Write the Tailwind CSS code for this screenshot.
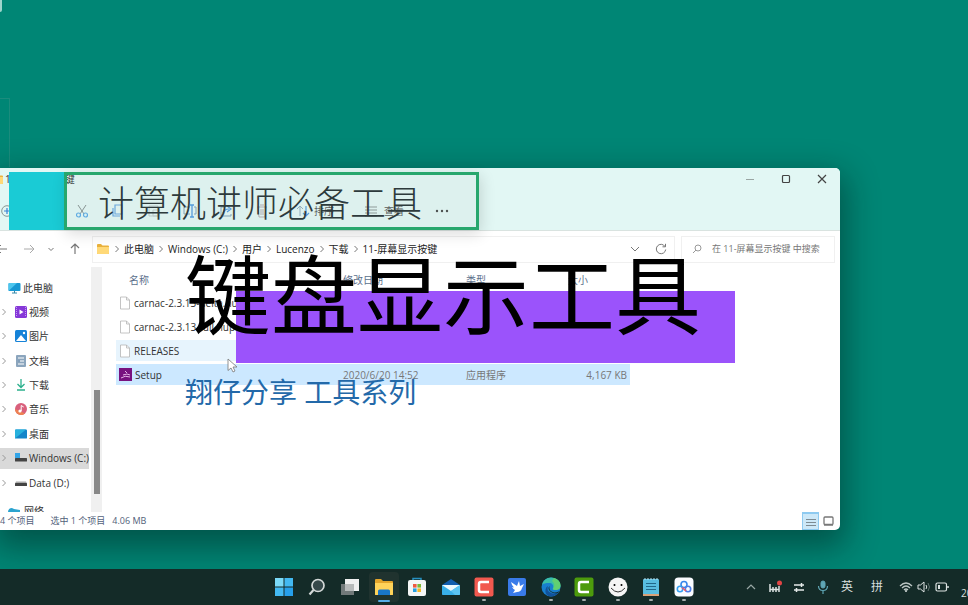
<!DOCTYPE html>
<html lang="zh-CN">

<head>
    <meta charset="UTF-8">
    <meta name="viewport" content="width=device-width, initial-scale=1.0">
    <title>键盘显示工具</title>
    <script src="https://cdn.jsdelivr.net/npm/@tailwindcss/browser@4"></script>
</head>

<body class="flex h-screen flex-col overflow-hidden bg-[#008675] font-['Open_Sans','Noto_Sans_CJK_SC',sans-serif] text-[10px] leading-4 text-[#333]">
    <!-- shared icons -->
    <svg class="hidden">
        <symbol id="chev" viewBox="0 0 8 8"><path d="M2.5 1l3 3-3 3" fill="none" stroke="currentColor" stroke-width="1" /></symbol>
        <symbol id="file" viewBox="0 0 12 14"><path d="M1.5 1h6l3 3v9h-9z" fill="#fff" stroke="#b5b5b5" stroke-width=".8" /><path d="M7.500 1v3h3" fill="none" stroke="#b5b5b5" stroke-width=".8" /></symbol>
        <symbol id="folder" viewBox="0 0 14 12"><path d="M1 2q0-1 1-1h3l1.500 1.500H12q1 0 1 1V10q0 1-1 1H2q-1 0-1-1z" fill="#eab23c" /><path d="M1 4h12v6q0 1-1 1H2q-1 0-1-1z" fill="#ffd978" /></symbol>
    </svg>

    <main class="relative flex-1 overflow-hidden">
        <div class="absolute top-0 left-0 h-3 w-[2px] rounded-br-full bg-[#9ed5cc]"></div>
        <div class="absolute top-[98px] left-0 h-[69px] w-[10px] border-t border-r border-[#1b8c7d]"></div>

        <!-- explorer window -->
        <section class="absolute top-[168px] right-[128px] bottom-[39px] left-0 flex flex-col overflow-hidden rounded-r-[5px] bg-white shadow-[0_12px_32px_6px_rgba(0,20,16,0.42)]">
            <header class="h-[63px] border-b border-[#d9e3e0] bg-[#e2f7f4]">
                <div class="flex h-[22px] items-center">
                    <svg class="-ml-[10px] h-3 w-[14px]"><use href="#folder" /></svg>
                    <h1 class="flex-1 pl-px whitespace-nowrap">1<span class="ml-[54px] text-black">键</span></h1>
                    <div class="flex text-[#444]">
                        <button aria-label="最小化" class="grid w-9 place-items-center"><svg class="size-[10px]" viewBox="0 0 10 10"><path d="M1 5.500h8" stroke="#9aa5a3" /></svg></button>
                        <button aria-label="最大化" class="grid w-9 place-items-center"><svg class="size-[10px]" viewBox="0 0 10 10"><rect x="1.500" y="1.500" width="7" height="7" rx="1" fill="none" stroke="currentColor" stroke-width="1.200" /></svg></button>
                        <button aria-label="关闭" class="grid w-9 place-items-center"><svg class="size-[10px]" viewBox="0 0 10 10"><path d="M1 1l8 8M9 1l-8 8" stroke="currentColor" stroke-width="1.200" /></svg></button>
                    </div>
                </div>
                <div class="flex h-[41px] items-center">
                    <button aria-label="新建" class="w-16"><svg class="ml-px size-3" viewBox="0 0 12 12"><circle cx="6" cy="6" r="5.300" fill="none" stroke="#8a9693" /><path d="M3 6h6M6 3v6" stroke="#3b82d0" stroke-width="1.200" /></svg></button>
                    <button aria-label="剪切" class="grid w-9 place-items-center"><svg class="size-[14px]" viewBox="0 0 14 14" fill="none"><path d="M3 1l6 9M11 1L5 10" stroke="#6f7b7b" /><circle cx="3.500" cy="11" r="2" stroke="#3b9be5" stroke-width="1.200" /><circle cx="10.500" cy="11" r="2" stroke="#3b9be5" stroke-width="1.200" /></svg></button>
                    <button aria-label="复制" class="grid w-9 place-items-center"><svg class="size-[14px]" viewBox="0 0 14 14" fill="none"><path d="M4 1h7v9H4zM9 12H2V4" stroke="#4a96dc" stroke-width="1.200" /></svg></button>
                    <button aria-label="粘贴" class="grid w-9 place-items-center"><svg class="size-[14px]" viewBox="0 0 14 14" fill="none"><path d="M2 2h9v10H2zM6 6h6v6H6z" stroke="#b6c4c3" /></svg></button>
                    <button aria-label="重命名" class="grid w-9 place-items-center"><svg class="size-[14px]" viewBox="0 0 14 14" fill="none"><path d="M7 3H1v7h6M11 3h2v7h-2" stroke="#6b8fae" /><path d="M7 1h4M7 13h4M9 1v12" stroke="#2d86dc" stroke-width="1.300" /></svg></button>
                    <button aria-label="共享" class="grid w-9 place-items-center"><svg class="size-[14px]" viewBox="0 0 14 14" fill="none"><path d="M6 3H2v9h10v-2" stroke="#6b8fae" /><path d="M4 9c1-3 3-4 6-4M8 2l4 3-4 3" stroke="#2d86dc" stroke-width="1.200" /></svg></button>
                    <button aria-label="删除" class="grid w-9 place-items-center"><svg class="size-[14px]" viewBox="0 0 14 14" fill="none"><path d="M2 3h10M3 3l1 10h6l1-10M5 1h4M6 5v6M8 5v6" stroke="#a79aa0" /></svg></button>
                    <button class="ml-4 flex items-center gap-1"><svg class="size-[14px]" viewBox="0 0 14 14" fill="none"><path d="M4 12V2M1 5l3-3 3 3" stroke="#7f9cb5" /><path d="M10 2v10M7 9l3 3 3-3" stroke="#2d86dc" stroke-width="1.200" /></svg>排序</button>
                    <button class="ml-[30px] flex items-center gap-1.5"><svg class="size-[14px]" viewBox="0 0 14 14"><path d="M1 3h12M1 6h12M1 9h12M1 12h12" stroke="#7a8583" /></svg>查看</button>
                    <button aria-label="更多" class="ml-5 grid w-9 place-items-center"><svg class="size-[14px]" viewBox="0 0 14 14" fill="#222"><circle cx="2" cy="7" r="1.200" /><circle cx="7" cy="7" r="1.200" /><circle cx="12" cy="7" r="1.200" /></svg></button>
                </div>
            </header>

            <!-- address bar -->
            <div class="flex h-9 items-center text-[#777]">
                <nav class="flex w-[92px] items-center">
                    <button aria-label="后退" class="-ml-1 w-[27px]"><svg class="size-3" viewBox="0 0 12 12" fill="none" stroke="currentColor"><path d="M11 6H1M5 2L1 6l4 4" /></svg></button>
                    <button aria-label="前进" class="w-6"><svg class="size-3" viewBox="0 0 12 12" fill="none" stroke="#aaa"><path d="M1 6h10M7 2l4 4-4 4" /></svg></button>
                    <button aria-label="最近" class="w-[22px]"><svg class="size-2" viewBox="0 0 8 8" fill="none" stroke="currentColor"><path d="M1.500 3L4 5.500 6.500 3" /></svg></button>
                    <button aria-label="上移"><svg class="size-3" viewBox="0 0 12 12" fill="none" stroke="currentColor" stroke-width="1.200"><path d="M6 11V1M2 5l4-4 4 4" /></svg></button>
                </nav>
                <div class="flex h-[27px] flex-1 items-center gap-[3px] border border-[#f0f0f0] pl-[3px] whitespace-nowrap">
                    <svg class="h-3 w-[14px]"><use href="#folder" /></svg>
                    <svg class="size-2"><use href="#chev" /></svg><a href="#" class="text-[#222]">此电脑</a>
                    <svg class="size-2"><use href="#chev" /></svg><a href="#" class="text-[#222]">Windows (C:)</a>
                    <svg class="size-2"><use href="#chev" /></svg><a href="#" class="text-[#222]">用户</a>
                    <svg class="size-2"><use href="#chev" /></svg><a href="#" class="text-[#222]">Lucenzo</a>
                    <svg class="size-2"><use href="#chev" /></svg><a href="#" class="text-[#222]">下载</a>
                    <svg class="size-2"><use href="#chev" /></svg><a href="#" class="text-[#222]">11-屏幕显示按键</a>
                    <button aria-label="展开" class="ml-auto"><svg class="size-[10px]" viewBox="0 0 10 10" fill="none" stroke="currentColor"><path d="M1 3l4 4 4-4" /></svg></button>
                    <button aria-label="刷新" class="mr-[7px] ml-3"><svg class="size-3" viewBox="0 0 12 12" fill="none" stroke="currentColor"><path d="M10 3.500A4.700 4.700 0 1 0 10.700 6.500M10.500 .8v3h-3" /></svg></button>
                </div>
                <label class="mr-[5px] ml-1.5 flex h-[27px] w-[154px] items-center gap-2.5 border border-[#f0f0f0] pl-2.5">
                    <svg class="size-[10px] shrink-0" viewBox="0 0 10 10" fill="none" stroke="#999"><circle cx="6" cy="4" r="3" /><path d="M4 6L1 9" /></svg>
                    <input type="text" aria-label="搜索" placeholder="在 11-屏幕显示按键 中搜索" class="min-w-0 flex-1 text-[9px] outline-none placeholder:text-[#777]">
                </label>
            </div>

            <div class="flex min-h-0 flex-1">
                <!-- navigation tree -->
                <aside class="w-[91px] overflow-hidden pt-[10px] whitespace-nowrap">
                    <ul class="flex h-[216px] flex-col justify-between">
                        <li class="flex h-[21px] items-center pl-2"><svg class="mr-0.5 h-3 w-[13px]" viewBox="0 0 13 12"><rect x=".5" y="1" width="12" height="8" rx="1" fill="#1798d3" /><path d="M.5 9V2q0-1 1-1H9z" fill="#4cc6ee" /><path d="M4 11h5M6.500 9v2" stroke="#3688a8" /></svg>此电脑</li>
                        <li class="flex h-[21px] items-center"><svg class="mr-[7px] size-2 text-[#999]"><use href="#chev" /></svg><svg class="mr-0.5 size-3" viewBox="0 0 12 12"><rect width="12" height="12" rx="1.500" fill="#8638d8" /><path d="M1.500 1v10M10.500 1v10" stroke="#c59af2" stroke-dasharray="1 1" /><path d="M4.500 3.500L8.500 6l-4 2.500z" fill="#fff" /></svg>视频</li>
                        <li class="flex h-[21px] items-center"><svg class="mr-[7px] size-2 text-[#999]"><use href="#chev" /></svg><svg class="mr-0.5 size-3" viewBox="0 0 12 12"><rect width="12" height="12" rx="1.500" fill="#1683d8" /><path d="M1 11l5-6 5 6z" fill="#fff" /><circle cx="9" cy="3" r="1.200" fill="#fff" /></svg>图片</li>
                        <li class="flex h-[21px] items-center"><svg class="mr-[7px] size-2 text-[#999]"><use href="#chev" /></svg><svg class="mr-0.5 size-3" viewBox="0 0 12 12"><rect x="1" width="10" height="12" rx="1" fill="#8ba5bd" /><path d="M3 3h6M3 6h6M3 9h6" stroke="#fff" /><path d="M3 6h2" stroke="#3f6c96" /></svg>文档</li>
                        <li class="flex h-[21px] items-center"><svg class="mr-[7px] size-2 text-[#999]"><use href="#chev" /></svg><svg class="mr-0.5 size-3" viewBox="0 0 12 12" fill="none" stroke="#2bb08c" stroke-width="1.300"><path d="M6 0v8M2.500 5L6 8.500 9.500 5M2 11h8" /></svg>下载</li>
                        <li class="flex h-[21px] items-center"><svg class="mr-[7px] size-2 text-[#999]"><use href="#chev" /></svg><svg class="mr-0.5 size-3" viewBox="0 0 12 12"><circle cx="6" cy="6" r="6" fill="#d9607c" /><path d="M0 6a6 6 0 0 0 10 4.500z" fill="#ed8253" /><circle cx="5" cy="8" r="1.600" fill="#fff" /><path d="M6.200 8V2.500l2.500 1.500" fill="none" stroke="#fff" /></svg>音乐</li>
                        <li class="flex h-[21px] items-center"><svg class="mr-[7px] size-2 text-[#999]"><use href="#chev" /></svg><svg class="mr-0.5 size-3" viewBox="0 0 13 12"><rect y="1" width="13" height="10" rx="1" fill="#1485c9" /><path d="M0 11V2q0-1 1-1h11z" fill="#27b1dd" /></svg>桌面</li>
                        <li class="mr-0.5 flex h-[21px] items-center bg-[#d9d9d9]"><svg class="mr-[7px] size-2 shrink-0 text-[#999]"><use href="#chev" /></svg><svg class="mr-0.5 size-3 shrink-0" viewBox="0 0 12 12"><path d="M0 1h5v5H0z" fill="#33a5e8" /><rect y="6" width="12" height="3.500" rx=".5" fill="#444" /></svg>Windows (C:)</li>
                        <li class="flex h-[21px] items-center"><svg class="mr-[7px] size-2 text-[#999]"><use href="#chev" /></svg><svg class="mr-0.5 size-3" viewBox="0 0 12 12"><path d="M1 4.500h10l1 2H0z" fill="#aaa" /><rect y="6" width="12" height="3" rx=".5" fill="#444" /></svg>Data (D:)</li>
                    </ul>
                    <div class="mt-2.5 flex items-start pl-2"><svg class="mt-1 mr-1 size-3" viewBox="0 0 12 12"><path d="M0 4q2-5 6-2l6 1v7H1z" fill="#2aa3cf" /></svg>网络</div>
                </aside>
                <div class="w-[11px] bg-[#f0f0f0] pt-[123px]"><div class="mx-auto h-[104px] w-[6px] bg-[#888]"></div></div>

                <!-- file list -->
                <div class="min-w-0 flex-1 pl-[14px]">
                    <table class="w-[514px] table-fixed border-separate border-spacing-x-0 border-spacing-y-[3px] whitespace-nowrap">
                        <thead>
                            <tr class="h-[19px] text-left text-[#5c6f8c]">
                                <th class="w-[219px] pl-[13px] font-normal">名称</th>
                                <th class="w-[123px] pl-2 font-normal">修改日期</th>
                                <th class="w-[104px] pl-2 font-normal">类型</th>
                                <th class="pl-1.5 font-normal">大小</th>
                            </tr>
                        </thead>
                        <tbody class="text-[#777]">
                            <tr class="h-[21px]">
                                <td class="pl-[3px] text-[#333]"><span class="flex items-center gap-[3px]"><svg class="h-[14px] w-3"><use href="#file" /></svg>carnac-2.3.13-delta.nup</span></td>
                                <td></td>
                                <td></td>
                                <td></td>
                            </tr>
                            <tr class="h-[21px]">
                                <td class="pl-[3px] text-[#333]"><span class="flex items-center gap-[3px]"><svg class="h-[14px] w-3"><use href="#file" /></svg>carnac-2.3.13-full.nup</span></td>
                                <td></td>
                                <td></td>
                                <td></td>
                            </tr>
                            <tr class="h-[21px] bg-[#e7f4fd]">
                                <td class="pl-[3px] text-[#333]"><span class="flex items-center gap-[3px]"><svg class="h-[14px] w-3"><use href="#file" /></svg>RELEASES</span></td>
                                <td></td>
                                <td></td>
                                <td></td>
                            </tr>
                            <tr class="h-[21px] bg-[#cce8ff]">
                                <td class="pl-[3px] text-[#333]"><span class="flex items-center gap-[3px]"><svg class="size-[13px]" viewBox="0 0 13 13"><rect width="13" height="13" fill="#78127f" /><path d="M2 10q4-3 9-1M4 7l4-1 3 1M6 3l2 2" fill="none" stroke="#e5b5e8" /></svg>Setup</span></td>
                                <td class="pl-2">2020/6/20 14:52</td>
                                <td class="pl-2">应用程序</td>
                                <td class="pr-[3px] text-right">4,167 KB</td>
                            </tr>
                        </tbody>
                    </table>
                </div>
            </div>

            <footer class="flex h-[18px] items-center text-[9px] text-[#52617a]">
                <span>4 个项目</span>
                <span class="ml-4">选中 1 个项目&nbsp;&nbsp; 4.06 MB</span>
                <button aria-label="详细信息" class="mr-1 ml-auto grid h-[18px] w-[17px] place-items-center border border-t-2 border-[#8ecaf0] bg-[#cce8f8]"><svg class="size-[10px]" viewBox="0 0 10 10"><path d="M0 2.500h10M0 5.500h10M0 8.500h10" stroke="#7d8b93" stroke-width="1.200" /></svg></button>
                <button aria-label="缩略图" class="mr-1.5"><svg class="size-[11px]" viewBox="0 0 11 11"><rect x="1" y="1" width="9" height="7.500" rx="1" fill="#fff" stroke="#777" stroke-width="1.300" /><path d="M1 9.500h9" stroke="#999" /></svg></button>
            </footer>
        </section>

        <!-- video title overlay -->
        <div class="absolute top-[172px] left-[9px] flex h-[58px]">
            <div class="w-[55px] bg-[#1acbd5]"></div>
            <div class="w-[415px] border-3 border-[#27a76d] bg-[#cfdedb]/25 pt-0.5 pl-[31px] text-[36px] leading-[54px] font-light whitespace-nowrap text-[#2d3a3c] shadow-[2px_4px_14px_rgba(0,0,0,0.14)]">计算机讲师必备工具</div>
        </div>
        <div class="absolute top-[291px] left-[236px] h-[72px] w-[499px] bg-[#9b53fb]"></div>
        <h2 class="absolute top-[245px] left-[185px] text-[86px] leading-[100px] whitespace-nowrap text-black">键盘显示工具</h2>
        <p class="absolute top-[372px] left-[185px] text-[28px] leading-10 whitespace-nowrap text-[#2369a9]">翔仔分享 工具系列</p>
        <svg class="absolute top-[358px] left-[227px] h-[15px] w-[11px]" viewBox="0 0 11 15"><path d="M1 1v11.500l3-2.500 2 4 2-1-2-4h4z" fill="#fff" stroke="#777" stroke-width=".8" /></svg>
    </main>

    <!-- taskbar -->
    <footer class="grid h-9 grid-cols-[1fr_434px_1fr] items-center bg-[#142b28] text-[#d8dfde]">
        <span></span>
        <nav class="grid h-9 grid-cols-13 items-center justify-items-center">
            <button aria-label="开始"><svg class="size-[18px]" viewBox="0 0 18 18" fill="#43b9f2"><path d="M0 0h8.500v8.500H0z" fill="#7bdaf8" /><path d="M9.500 0H18v8.500H9.500zM0 9.500h8.500V18H0z" /><path d="M9.500 9.500H18V18H9.500z" fill="#269fea" /></svg></button>
            <button aria-label="搜索"><svg class="size-[18px]" viewBox="0 0 18 18" fill="none" stroke="#d4d9d8"><circle cx="10" cy="7.500" r="6" fill="#36494a" stroke-width="1.700" /><path d="M5.500 12L1.500 16.500" stroke-width="2.200" /></svg></button>
            <button aria-label="任务视图"><svg class="h-[18px] w-5" viewBox="0 0 20 18"><rect x="1" y="6" width="13" height="11" fill="#717979" /><rect x="5" y="1" width="14" height="12" fill="#f0f0f0" /><path d="M5 6h9v7H5z" fill="#b7baba" /></svg></button>
            <button aria-label="文件资源管理器" class="relative grid size-[30px] place-items-center rounded bg-[#20332f]"><svg class="h-[18px] w-5" viewBox="0 0 20 18"><path d="M1 2q0-1 1-1h5l2 2h9q1 0 1 1v13H1z" fill="#e4a52b" /><path d="M1 5h18v11q0 1-1 1H2q-1 0-1-1z" fill="#ffd35a" /><path d="M4 17v-4q0-1.500 1.500-1.500h9q1.500 0 1.500 1.500v4z" fill="#1976c9" /></svg><i class="absolute bottom-0 h-0.5 w-3 rounded bg-[#55aee8]"></i></button>
            <button aria-label="应用商店"><svg class="h-5 w-[18px]" viewBox="0 0 18 20"><path d="M5 4V1.500h8V4" fill="none" stroke="#268fbe" stroke-width="1.500" /><rect y="3" width="18" height="16" rx="2" fill="#f4f6f6" /><path d="M5 7h3.600v3.600H5z" fill="#ef5941" /><path d="M9.400 7H13v3.600H9.400z" fill="#7bb936" /><path d="M5 11.400h3.600V15H5z" fill="#279fdf" /><path d="M9.400 11.400H13V15H9.400z" fill="#f5b727" /></svg></button>
            <button aria-label="邮件"><svg class="h-[18px] w-5" viewBox="0 0 20 18"><path d="M1 7l9-6 9 6v9q0 1-1 1H2q-1 0-1-1z" fill="#125dae" /><path d="M1 7h18v9q0 1-1 1H2q-1 0-1-1z" fill="#38afe8" /><path d="M1 7h18l-9 6z" fill="#eef8fd" /><path d="M10 13l9-6v9q0 1-1 1h-4z" fill="#5cc4f2" /></svg></button>
            <button aria-label="录屏" class="relative"><svg class="size-5" viewBox="0 0 20 20"><rect x=".5" y=".5" width="19" height="19" rx="2" fill="#f1594f" /><path d="M15 5H7q-2 0-2 2v6q0 2 2 2h8" fill="none" stroke="#fff" stroke-width="2.500" /></svg><i class="absolute -bottom-1 left-2 h-0.5 w-1 rounded bg-[#a5aead]"></i></button>
            <button aria-label="飞鸟"><svg class="size-[18px]" viewBox="0 0 18 18"><rect width="18" height="18" rx="2" fill="#397be9" /><path d="M3 4l6 4q1-3 2-5l1 5 4-2-2 4q-1 4-5 4l-4 1 2-3q-2-1-3-3l2 .5Q3.500 7 3 4z" fill="#fff" /></svg></button>
            <button aria-label="Edge" class="relative"><svg class="size-5" viewBox="0 0 20 20"><circle cx="10" cy="10" r="9.500" fill="#187fcf" /><path d="M1 8Q3 .5 10 .5c6 0 9.500 4 9.500 8 0 3-2.500 4.500-6 4.500-2 0-2-1-1.500-2 1-3-1-5-4-5S2 6.500 1 8z" fill="#39bea9" /><path d="M13 1q6.500 2 6.500 7.500 0 4-4 4.500-3 0-3.500-1 3-5-1-8z" fill="#61cf72" /><path d="M7 9q-2 5 3 7 4 1.500 8-1.500-3 5-8.500 5-6-1-5-7Q5 9.500 7 9z" fill="#12539b" /><path d="M8.500 9Q7 14 13 15.500q3 .3 5-1.500l-1 2q-4 1-7-1Q6 12 8.500 9z" fill="#142b28" /></svg><i class="absolute -bottom-1 left-2 h-0.5 w-1 rounded bg-[#a5aead]"></i></button>
            <button aria-label="Camtasia" class="relative"><svg class="size-5" viewBox="0 0 20 20"><rect x=".5" y=".5" width="19" height="19" rx="2" fill="#4d9b0c" /><path d="M15 5H7q-2 0-2 2v6q0 2 2 2h8" fill="none" stroke="#fff" stroke-width="2.500" /></svg><i class="absolute -bottom-1 left-2 h-0.5 w-1 rounded bg-[#a5aead]"></i></button>
            <button aria-label="笑脸" class="relative"><svg class="size-5" viewBox="0 0 20 20"><circle cx="10" cy="10" r="9.500" fill="#f5f5f5" /><circle cx="6.500" cy="8" r="1" /><circle cx="13.500" cy="8" r="1" /><path d="M3 11q7 8 14 0" fill="none" stroke="#333" /></svg><i class="absolute -bottom-1 left-2 h-0.5 w-1 rounded bg-[#a5aead]"></i></button>
            <button aria-label="记事本" class="relative"><svg class="size-5" viewBox="0 0 20 20"><rect x="2" y="2" width="16" height="17" rx="1" fill="#58bde0" /><path d="M2 17h16v2H2z" fill="#d8a177" /><path d="M4 1v2M7 1v2M10 1v2M13 1v2M16 1v2" stroke="#b9e5f3" /><path d="M5 6.500h10M5 9.500h10M5 12.500h10" stroke="#21698b" stroke-width="1.200" /></svg><i class="absolute -bottom-1 left-2 h-0.5 w-1 rounded bg-[#a5aead]"></i></button>
            <button aria-label="百度网盘" class="relative"><svg class="size-5" viewBox="0 0 20 20" fill="none" stroke-width="1.600"><rect x=".5" y=".5" width="19" height="19" rx="4" fill="#fafcff" /><circle cx="10" cy="7.500" r="3" stroke="#3587ec" /><circle cx="6" cy="12" r="2.700" stroke="#35a0f0" /><circle cx="14" cy="12" r="2.700" stroke="#4a7ee8" /><path d="M8 10.500l4 3.500" stroke="#ee5569" /></svg><i class="absolute -bottom-1 left-2 h-0.5 w-1 rounded bg-[#a5aead]"></i></button>
        </nav>
        <div class="flex items-center justify-end overflow-hidden text-[12px]">
            <button aria-label="隐藏的图标" class="grid w-6 place-items-center"><svg class="size-[10px]" viewBox="0 0 10 10" fill="none" stroke="#9aa8a6" stroke-width="1.200"><path d="M1 7l4-4 4 4" /></svg></button>
            <button aria-label="录音" class="grid w-6 place-items-center"><svg class="size-[14px]" viewBox="0 0 14 14"><path d="M2 4v8M5 7v5M8 7v5M11 6v6M2 9.500h9" stroke="#dde3e2" stroke-width="1.500" /><circle cx="11.500" cy="3" r="2.500" fill="#e14444" /></svg></button>
            <button aria-label="切换" class="grid w-6 place-items-center"><svg class="size-3" viewBox="0 0 12 12" stroke="#e5eae9" stroke-width="1.500"><path d="M1 4h10M1 9h10M8.500 2v4M3.500 7v4" /></svg></button>
            <button aria-label="麦克风" class="grid w-6 place-items-center"><svg class="h-[14px] w-3" viewBox="0 0 12 14" fill="none" stroke="#5fa6b5"><rect x="4" y="1" width="4" height="7" rx="2" fill="#5fa6b5" /><path d="M1.500 6q0 4.500 4.500 4.500T10.500 6M6 10.500V14" stroke-width="1.200" /></svg></button>
            <button class="w-6">英</button>
            <button class="ml-1 w-7">拼</button>
            <button aria-label="网络和声音" class="ml-1 flex w-[58px] items-center justify-center gap-1">
                <svg class="size-[14px]" viewBox="0 0 14 14" fill="none" stroke="#bcc7c5" stroke-width="1.300"><path d="M1 6q6-6 12 0M3 8q4-4 8 0M5 10q2-2 4 0" /><circle cx="7" cy="11" r="1" fill="#dde3e2" stroke="none" /></svg>
                <svg class="size-[14px]" viewBox="0 0 14 14" fill="none" stroke="#dde3e2"><path d="M1 5h2.500L7 2v10L3.500 9H1z" /><path d="M9 5q1.500 2 0 4" /><path d="M11 3q3 4 0 8" stroke="#5d6f6c" /></svg>
                <svg class="size-[14px]" viewBox="0 0 14 14" fill="none" stroke="#dde3e2" stroke-width="1.200"><rect x="1" y="3" width="10.500" height="8" rx="1.500" /><path d="M13 6v2" stroke-width="1.500" /><path d="M3 5h2v4H3z" fill="#dde3e2" stroke="none" /></svg>
            </button>
            <time class="ml-2 w-[7px] overflow-hidden pt-3 text-[10px] leading-3">20</time>
        </div>
    </footer>
</body>

</html>
